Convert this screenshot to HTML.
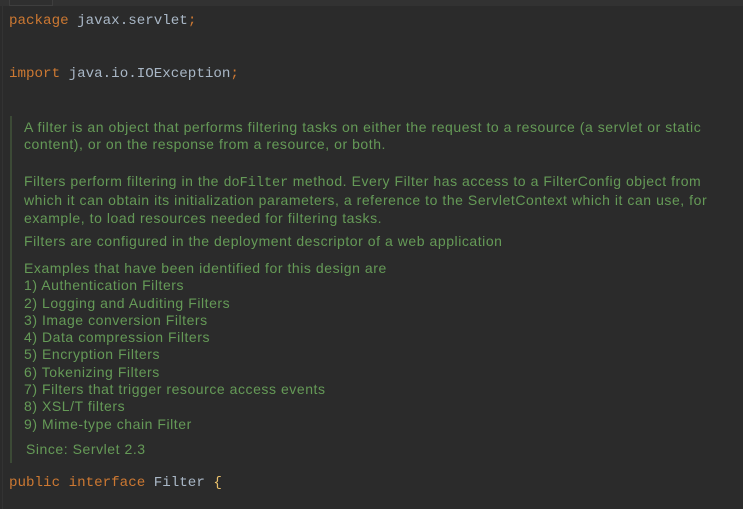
<!DOCTYPE html>
<html><head><style>
body{margin:0;width:743px;height:509px;background:#2b2b2b;position:relative;overflow:hidden}
.top{position:absolute;left:0;top:0;width:743px;height:6px;background:#323232}
.tab{position:absolute;left:9px;top:-1px;width:42px;height:6px;border:1px solid #3e3e3e;border-top:none;background:#2f2f2f}
.lb{position:absolute;left:2px;top:6px;width:1px;height:503px;background:#333}
.code{position:absolute;left:9px;font-family:"Liberation Mono",monospace;font-size:14.2px;color:#a9b7c6;white-space:pre;line-height:20px}
.k{color:#cc7832}.b{color:#e8bf6a}
.bar{position:absolute;left:10px;top:116px;width:2px;height:347px;background:#3c4a36}
.doc{position:absolute;left:24px;font-family:"Liberation Sans",sans-serif;font-size:14px;letter-spacing:0.55px;color:#659a57;white-space:pre;line-height:17.3px}
.m{font-family:"Liberation Mono",monospace;font-size:13.5px;letter-spacing:0}
</style></head><body>
<div class="top"></div><div class="tab"></div><div class="lb"></div>
<div class="code" style="top:11px"><span class="k">package</span> javax.servlet<span class="k">;</span></div>
<div class="code" style="top:64px"><span class="k">import</span> java.io.IOException<span class="k">;</span></div>
<div class="bar"></div>
<div class="doc" style="top:119px">A filter is an object that performs filtering tasks on either the request to a resource (a servlet or static
content), or on the response from a resource, or both.</div>
<div class="doc" style="top:173px">Filters perform filtering in the <span class="m">doFilter</span> method. Every Filter has access to a FilterConfig object from
which it can obtain its initialization parameters, a reference to the ServletContext which it can use, for
example, to load resources needed for filtering tasks.</div>
<div class="doc" style="top:233px">Filters are configured in the deployment descriptor of a web application</div>
<div class="doc" style="top:260px">Examples that have been identified for this design are
1) Authentication Filters
2) Logging and Auditing Filters
3) Image conversion Filters
4) Data compression Filters
5) Encryption Filters
6) Tokenizing Filters
7) Filters that trigger resource access events
8) XSL/T filters
9) Mime-type chain Filter</div>
<div class="doc" style="top:441px;left:26px">Since: Servlet 2.3</div>
<div class="code" style="top:473px"><span class="k">public interface</span> Filter <span class="b">{</span></div>
</body></html>
